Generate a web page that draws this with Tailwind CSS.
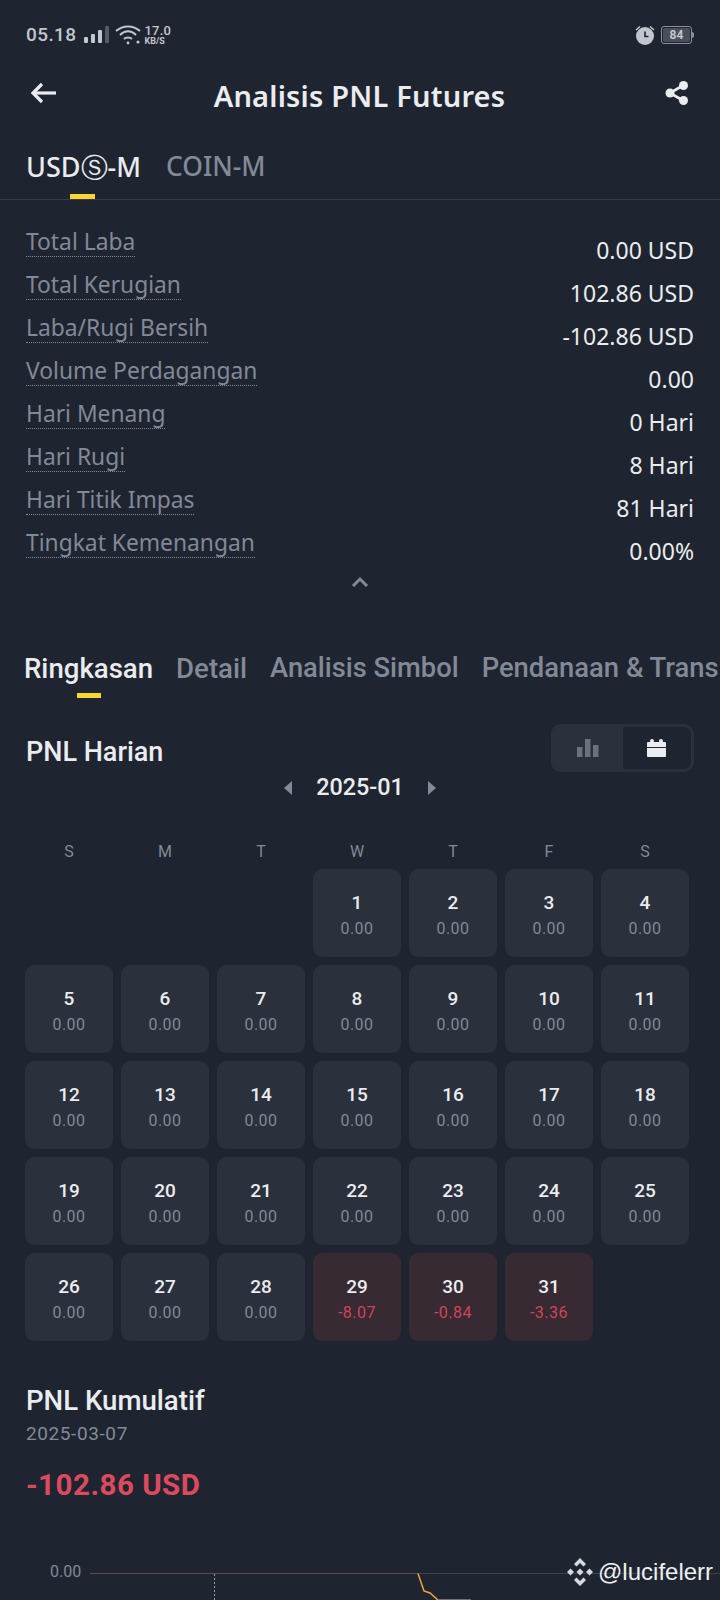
<!DOCTYPE html>
<html lang="en">
<head>
<meta charset="UTF-8">
<meta name="viewport" content="width=device-width, initial-scale=1.0">
<script src="https://cdn.jsdelivr.net/npm/@tailwindcss/browser@4"></script>
<title>Analisis PNL Futures</title>
</head>
<body class="bg-[#1f2530]">
<div class="relative w-[720px] h-[1600px] overflow-hidden bg-[#1f2530] font-['Noto_Sans',sans-serif] text-[#eaecef]">

  <!-- status bar -->
  <div class="flex items-center justify-between h-[70px] pl-[26px] pr-[26px] text-[#c3c6cd]">
    <div class="flex items-center">
      <span class="font-['Roboto',sans-serif] font-medium text-[19px] tracking-[0.4px]">05.18</span>
      <svg class="ml-[8px]" width="25" height="18" viewBox="0 0 25 18" fill="#c3c6cd"><rect x="0" y="11" width="4" height="6" rx="1"/><rect x="7" y="8" width="4" height="9" rx="1"/><rect x="14" y="4" width="4" height="13" rx="1"/><rect x="21" y="0" width="4" height="17" rx="1" fill="#565b66"/></svg>
      <svg class="ml-[6px]" width="26" height="20" viewBox="0 0 26 20" fill="none" stroke="#c3c6cd" stroke-width="2"><path d="M1 6 C8 0 18 0 25 6"/><path d="M5 10 C10 5 16 5 21 10"/><path d="M9 14 C11 12 15 12 17 14"/><circle cx="13" cy="18" r="1.4" fill="#c3c6cd" stroke="none"/><circle cx="23" cy="17" r="1.6" fill="#c3c6cd" stroke="none"/></svg>
      <div class="ml-[3px] flex flex-col items-start font-['Roboto',sans-serif] font-medium">
        <span class="text-[13px] leading-[11px] tracking-[0.2px]">17.0</span>
        <span class="text-[9px] leading-[10px] font-bold">KB/S</span>
      </div>
    </div>
    <div class="flex items-center">
      <svg width="22" height="22" viewBox="0 0 22 22"><path d="M2 6 L6 2.5 M20 6 L16 2.5" stroke="#c3c6cd" stroke-width="1.6" fill="none"/><circle cx="11" cy="12" r="9" fill="#c3c6cd"/><path d="M11 7.5 V12.5 H14.5" stroke="#1f2530" stroke-width="1.6" fill="none"/></svg>
      <div class="ml-[5px] flex items-center">
        <div class="flex items-center justify-center w-[31px] h-[18px] rounded-[3px] border border-[#8a8e98]">
          <span class="flex items-center justify-center w-[27px] h-[14px] rounded-[2px] bg-[#4a4f5c] font-['Roboto',sans-serif] font-bold text-[12px] leading-none text-[#c3c6cd]">84</span>
        </div>
        <div class="w-[2px] h-[6px] bg-[#8a8e98] rounded-r-sm"></div>
      </div>
    </div>
  </div>

  <!-- title bar -->
  <div class="relative flex items-center justify-between h-[50px] pl-[30px] pr-[31px]">
    <svg class="-mt-[4px]" width="26" height="22" viewBox="0 0 26 22" fill="none" stroke="#eaecef" stroke-width="3.2"><path d="M12 2 L3 11 L12 20"/><path d="M3 11 H26"/></svg>
    <h1 class="text-[29px] font-semibold leading-none tracking-[0.2px] -ml-[2px]">Analisis PNL Futures</h1>
    <svg class="-mt-[4px]" width="24" height="26" viewBox="0 0 24 26" fill="#eaecef" stroke="#eaecef"><circle cx="18.5" cy="5.5" r="4.5" stroke="none"/><circle cx="18.5" cy="20.5" r="4.5" stroke="none"/><circle cx="5" cy="13" r="4.5" stroke="none"/><path d="M18 5.5 L5 13 L18 20.5" fill="none" stroke-width="2.6"/></svg>
  </div>

  <!-- market tabs -->
  <div class="relative flex items-center gap-[25px] h-[80px] pt-[14px] pl-[26px] border-b border-[#363b46]">
    <span class="text-[27px] font-medium leading-none">USDⓈ-M</span>
    <span class="text-[26.4px] font-medium leading-none text-[#828997]">COIN-M</span>
    <div class="absolute left-[70px] bottom-0 w-[25px] h-[5px] bg-[#fcd535]"></div>
  </div>

  <!-- stats -->
  <div class="flex flex-col pt-[26px] pl-[26px] pr-[26px]">
    <div class="flex justify-between items-start h-[43px]"><span class="pt-[2px] text-[22.8px] leading-[28px] text-[#828997] border-b border-dotted border-[#828997]">Total Laba</span><span class="mt-[9px] text-[23px] leading-[30px]">0.00 USD</span></div>
    <div class="flex justify-between items-start h-[43px]"><span class="pt-[2px] text-[22.8px] leading-[28px] text-[#828997] border-b border-dotted border-[#828997]">Total Kerugian</span><span class="mt-[9px] text-[23px] leading-[30px]">102.86 USD</span></div>
    <div class="flex justify-between items-start h-[43px]"><span class="pt-[2px] text-[22.8px] leading-[28px] text-[#828997] border-b border-dotted border-[#828997]">Laba/Rugi Bersih</span><span class="mt-[9px] text-[23px] leading-[30px]">-102.86 USD</span></div>
    <div class="flex justify-between items-start h-[43px]"><span class="pt-[2px] text-[22.8px] leading-[28px] text-[#828997] border-b border-dotted border-[#828997]">Volume Perdagangan</span><span class="mt-[9px] text-[23px] leading-[30px]">0.00</span></div>
    <div class="flex justify-between items-start h-[43px]"><span class="pt-[2px] text-[22.8px] leading-[28px] text-[#828997] border-b border-dotted border-[#828997]">Hari Menang</span><span class="mt-[9px] text-[23px] leading-[30px]">0 Hari</span></div>
    <div class="flex justify-between items-start h-[43px]"><span class="pt-[2px] text-[22.8px] leading-[28px] text-[#828997] border-b border-dotted border-[#828997]">Hari Rugi</span><span class="mt-[9px] text-[23px] leading-[30px]">8 Hari</span></div>
    <div class="flex justify-between items-start h-[43px]"><span class="pt-[2px] text-[22.8px] leading-[28px] text-[#828997] border-b border-dotted border-[#828997]">Hari Titik Impas</span><span class="mt-[9px] text-[23px] leading-[30px]">81 Hari</span></div>
    <div class="flex justify-between items-start h-[43px]"><span class="pt-[2px] text-[22.8px] leading-[28px] text-[#828997] border-b border-dotted border-[#828997]">Tingkat Kemenangan</span><span class="mt-[9px] text-[23px] leading-[30px]">0.00%</span></div>
  </div>
  <div class="flex justify-center mt-[6px] h-[14px]">
    <svg width="18" height="12" viewBox="0 0 18 12" fill="none" stroke="#828997" stroke-width="3"><path d="M2 10 L9 3 L16 10"/></svg>
  </div>

  <!-- section tabs -->
  <div class="relative mt-[57px] flex items-center gap-[23px] pt-[2px] pl-[24px] whitespace-nowrap h-[42px] font-['Roboto',sans-serif]">
    <span class="text-[27.6px] font-medium leading-none">Ringkasan</span>
    <span class="text-[27.6px] font-medium leading-none text-[#828997]">Detail</span>
    <span class="text-[27.3px] font-medium leading-none text-[#828997]">Analisis Simbol</span>
    <span class="text-[27.4px] font-medium leading-none text-[#828997]">Pendanaan &amp; Trans</span>
    <div class="absolute left-[77px] bottom-[-9px] w-[24px] h-[5px] bg-[#fcd535]"></div>
  </div>

  <!-- daily pnl head -->
  <div class="flex items-center justify-between mt-[35px] pl-[26px] pr-[26px] font-['Roboto',sans-serif]">
    <span class="text-[27px] font-medium leading-none mt-[8px]">PNL Harian</span>
    <div class="flex w-[143px] h-[48px] rounded-[10px] border-[3px] border-[#2a303c] overflow-hidden">
      <div class="flex-1 flex items-center justify-center bg-[#2a303c]">
        <svg width="22" height="18" viewBox="0 0 22 18" fill="#6b707c"><rect x="0" y="8" width="5.5" height="10"/><rect x="8" y="0" width="5.5" height="18"/><rect x="16" y="6" width="5.5" height="12"/></svg>
      </div>
      <div class="flex-1 flex items-center justify-center">
        <svg width="19" height="18" viewBox="0 0 19 18" fill="#eaecef"><circle cx="5" cy="2" r="2"/><circle cx="14" cy="2" r="2"/><path d="M0 4 Q0 3 1 3 H18 Q19 3 19 4 V8 H0 Z"/><path d="M0 9 H19 V17 Q19 18 18 18 H1 Q0 18 0 17 Z"/></svg>
      </div>
    </div>
  </div>

  <!-- month switch -->
  <div class="flex items-center justify-center gap-[23px] mt-[-1px] h-[34px] font-['Roboto',sans-serif]">
    <svg width="10" height="14" viewBox="0 0 10 14" fill="#828997"><path d="M9 0 V14 L1 7 Z"/></svg>
    <span class="text-[23.4px] font-medium leading-none">2025-01</span>
    <svg width="10" height="14" viewBox="0 0 10 14" fill="#828997"><path d="M1 0 V14 L9 7 Z"/></svg>
  </div>

  <!-- calendar -->
  <div class="grid grid-cols-7 gap-[8px] mt-[36px] pl-[25px] pr-[31px] font-['Roboto',sans-serif]">
    <div class="col-span-7 grid grid-cols-7 gap-[8px] text-center text-[16px] leading-[22px] text-[#828997] h-[22px] -mb-[2px]"><span>S</span><span>M</span><span>T</span><span>W</span><span>T</span><span>F</span><span>S</span></div>
    <div class="h-[88px]"></div><div class="h-[88px]"></div><div class="h-[88px]"></div>
    <div class="flex flex-col items-center justify-center h-[88px] pt-[5px] rounded-[9px] bg-[#2a303c]"><span class="text-[19px] leading-[26px] font-medium">1</span><span class="text-[16px] leading-[25px] tracking-[0.5px] text-[#828997]">0.00</span></div>
    <div class="flex flex-col items-center justify-center h-[88px] pt-[5px] rounded-[9px] bg-[#2a303c]"><span class="text-[19px] leading-[26px] font-medium">2</span><span class="text-[16px] leading-[25px] tracking-[0.5px] text-[#828997]">0.00</span></div>
    <div class="flex flex-col items-center justify-center h-[88px] pt-[5px] rounded-[9px] bg-[#2a303c]"><span class="text-[19px] leading-[26px] font-medium">3</span><span class="text-[16px] leading-[25px] tracking-[0.5px] text-[#828997]">0.00</span></div>
    <div class="flex flex-col items-center justify-center h-[88px] pt-[5px] rounded-[9px] bg-[#2a303c]"><span class="text-[19px] leading-[26px] font-medium">4</span><span class="text-[16px] leading-[25px] tracking-[0.5px] text-[#828997]">0.00</span></div>
    <div class="flex flex-col items-center justify-center h-[88px] pt-[5px] rounded-[9px] bg-[#2a303c]"><span class="text-[19px] leading-[26px] font-medium">5</span><span class="text-[16px] leading-[25px] tracking-[0.5px] text-[#828997]">0.00</span></div>
    <div class="flex flex-col items-center justify-center h-[88px] pt-[5px] rounded-[9px] bg-[#2a303c]"><span class="text-[19px] leading-[26px] font-medium">6</span><span class="text-[16px] leading-[25px] tracking-[0.5px] text-[#828997]">0.00</span></div>
    <div class="flex flex-col items-center justify-center h-[88px] pt-[5px] rounded-[9px] bg-[#2a303c]"><span class="text-[19px] leading-[26px] font-medium">7</span><span class="text-[16px] leading-[25px] tracking-[0.5px] text-[#828997]">0.00</span></div>
    <div class="flex flex-col items-center justify-center h-[88px] pt-[5px] rounded-[9px] bg-[#2a303c]"><span class="text-[19px] leading-[26px] font-medium">8</span><span class="text-[16px] leading-[25px] tracking-[0.5px] text-[#828997]">0.00</span></div>
    <div class="flex flex-col items-center justify-center h-[88px] pt-[5px] rounded-[9px] bg-[#2a303c]"><span class="text-[19px] leading-[26px] font-medium">9</span><span class="text-[16px] leading-[25px] tracking-[0.5px] text-[#828997]">0.00</span></div>
    <div class="flex flex-col items-center justify-center h-[88px] pt-[5px] rounded-[9px] bg-[#2a303c]"><span class="text-[19px] leading-[26px] font-medium">10</span><span class="text-[16px] leading-[25px] tracking-[0.5px] text-[#828997]">0.00</span></div>
    <div class="flex flex-col items-center justify-center h-[88px] pt-[5px] rounded-[9px] bg-[#2a303c]"><span class="text-[19px] leading-[26px] font-medium">11</span><span class="text-[16px] leading-[25px] tracking-[0.5px] text-[#828997]">0.00</span></div>
    <div class="flex flex-col items-center justify-center h-[88px] pt-[5px] rounded-[9px] bg-[#2a303c]"><span class="text-[19px] leading-[26px] font-medium">12</span><span class="text-[16px] leading-[25px] tracking-[0.5px] text-[#828997]">0.00</span></div>
    <div class="flex flex-col items-center justify-center h-[88px] pt-[5px] rounded-[9px] bg-[#2a303c]"><span class="text-[19px] leading-[26px] font-medium">13</span><span class="text-[16px] leading-[25px] tracking-[0.5px] text-[#828997]">0.00</span></div>
    <div class="flex flex-col items-center justify-center h-[88px] pt-[5px] rounded-[9px] bg-[#2a303c]"><span class="text-[19px] leading-[26px] font-medium">14</span><span class="text-[16px] leading-[25px] tracking-[0.5px] text-[#828997]">0.00</span></div>
    <div class="flex flex-col items-center justify-center h-[88px] pt-[5px] rounded-[9px] bg-[#2a303c]"><span class="text-[19px] leading-[26px] font-medium">15</span><span class="text-[16px] leading-[25px] tracking-[0.5px] text-[#828997]">0.00</span></div>
    <div class="flex flex-col items-center justify-center h-[88px] pt-[5px] rounded-[9px] bg-[#2a303c]"><span class="text-[19px] leading-[26px] font-medium">16</span><span class="text-[16px] leading-[25px] tracking-[0.5px] text-[#828997]">0.00</span></div>
    <div class="flex flex-col items-center justify-center h-[88px] pt-[5px] rounded-[9px] bg-[#2a303c]"><span class="text-[19px] leading-[26px] font-medium">17</span><span class="text-[16px] leading-[25px] tracking-[0.5px] text-[#828997]">0.00</span></div>
    <div class="flex flex-col items-center justify-center h-[88px] pt-[5px] rounded-[9px] bg-[#2a303c]"><span class="text-[19px] leading-[26px] font-medium">18</span><span class="text-[16px] leading-[25px] tracking-[0.5px] text-[#828997]">0.00</span></div>
    <div class="flex flex-col items-center justify-center h-[88px] pt-[5px] rounded-[9px] bg-[#2a303c]"><span class="text-[19px] leading-[26px] font-medium">19</span><span class="text-[16px] leading-[25px] tracking-[0.5px] text-[#828997]">0.00</span></div>
    <div class="flex flex-col items-center justify-center h-[88px] pt-[5px] rounded-[9px] bg-[#2a303c]"><span class="text-[19px] leading-[26px] font-medium">20</span><span class="text-[16px] leading-[25px] tracking-[0.5px] text-[#828997]">0.00</span></div>
    <div class="flex flex-col items-center justify-center h-[88px] pt-[5px] rounded-[9px] bg-[#2a303c]"><span class="text-[19px] leading-[26px] font-medium">21</span><span class="text-[16px] leading-[25px] tracking-[0.5px] text-[#828997]">0.00</span></div>
    <div class="flex flex-col items-center justify-center h-[88px] pt-[5px] rounded-[9px] bg-[#2a303c]"><span class="text-[19px] leading-[26px] font-medium">22</span><span class="text-[16px] leading-[25px] tracking-[0.5px] text-[#828997]">0.00</span></div>
    <div class="flex flex-col items-center justify-center h-[88px] pt-[5px] rounded-[9px] bg-[#2a303c]"><span class="text-[19px] leading-[26px] font-medium">23</span><span class="text-[16px] leading-[25px] tracking-[0.5px] text-[#828997]">0.00</span></div>
    <div class="flex flex-col items-center justify-center h-[88px] pt-[5px] rounded-[9px] bg-[#2a303c]"><span class="text-[19px] leading-[26px] font-medium">24</span><span class="text-[16px] leading-[25px] tracking-[0.5px] text-[#828997]">0.00</span></div>
    <div class="flex flex-col items-center justify-center h-[88px] pt-[5px] rounded-[9px] bg-[#2a303c]"><span class="text-[19px] leading-[26px] font-medium">25</span><span class="text-[16px] leading-[25px] tracking-[0.5px] text-[#828997]">0.00</span></div>
    <div class="flex flex-col items-center justify-center h-[88px] pt-[5px] rounded-[9px] bg-[#2a303c]"><span class="text-[19px] leading-[26px] font-medium">26</span><span class="text-[16px] leading-[25px] tracking-[0.5px] text-[#828997]">0.00</span></div>
    <div class="flex flex-col items-center justify-center h-[88px] pt-[5px] rounded-[9px] bg-[#2a303c]"><span class="text-[19px] leading-[26px] font-medium">27</span><span class="text-[16px] leading-[25px] tracking-[0.5px] text-[#828997]">0.00</span></div>
    <div class="flex flex-col items-center justify-center h-[88px] pt-[5px] rounded-[9px] bg-[#2a303c]"><span class="text-[19px] leading-[26px] font-medium">28</span><span class="text-[16px] leading-[25px] tracking-[0.5px] text-[#828997]">0.00</span></div>
    <div class="flex flex-col items-center justify-center h-[88px] pt-[5px] rounded-[9px] bg-[#372a33]"><span class="text-[19px] leading-[26px] font-medium">29</span><span class="text-[16px] leading-[25px] tracking-[0.5px] text-[#cf4557]">-8.07</span></div>
    <div class="flex flex-col items-center justify-center h-[88px] pt-[5px] rounded-[9px] bg-[#372a33]"><span class="text-[19px] leading-[26px] font-medium">30</span><span class="text-[16px] leading-[25px] tracking-[0.5px] text-[#cf4557]">-0.84</span></div>
    <div class="flex flex-col items-center justify-center h-[88px] pt-[5px] rounded-[9px] bg-[#372a33]"><span class="text-[19px] leading-[26px] font-medium">31</span><span class="text-[16px] leading-[25px] tracking-[0.5px] text-[#cf4557]">-3.36</span></div>
  </div>

  <!-- cumulative -->
  <div class="mt-[43px] pl-[26px] font-['Roboto',sans-serif]">
    <div class="text-[27.6px] font-medium leading-[34px]">PNL Kumulatif</div>
    <div class="mt-[3px] text-[19px] leading-[26px] tracking-[0.6px] text-[#828997]">2025-03-07</div>
    <div class="mt-[20px] text-[29.5px] font-bold leading-[36px] tracking-[0.5px] text-[#dc4a60]">-102.86 USD</div>
  </div>

  <!-- chart, clipped by the bottom of the window -->
  <div class="absolute left-0 top-[1560px] w-[720px] h-[40px]">
    <span class="absolute left-[50px] top-[2px] font-['Roboto',sans-serif] text-[16px] leading-[20px] text-[#828997]">0.00</span>
    <svg class="absolute left-0 top-0" width="720" height="40" viewBox="0 0 720 40" fill="none">
      <path d="M90 13.5 H720" stroke="#3b404b"/>
      <path d="M90 13.5 H418" stroke="#6b4a45"/>
      <path d="M214.5 14 V40" stroke="#9a9ea8" stroke-dasharray="2 2"/>
      <path d="M418 13.5 L424 31 L430 33 L438 40" stroke="#f0a63c" stroke-width="1.5"/>
      <path d="M438 39.5 H471" stroke="#6b707c"/>
    </svg>
  </div>

  <!-- watermark -->
  <div class="absolute left-[566px] top-[1558px] flex items-center">
    <svg width="28" height="28" viewBox="0 0 28 28" fill="#d8dade"><path d="M14 0 L20 6 L17.5 8.5 L14 5 L10.5 8.5 L8 6 Z"/><path d="M14 28 L20 22 L17.5 19.5 L14 23 L10.5 19.5 L8 22 Z"/><path d="M4.5 10.5 L8 14 L4.5 17.5 L1 14 Z"/><path d="M23.5 10.5 L27 14 L23.5 17.5 L20 14 Z"/><path d="M14 10.5 L17.5 14 L14 17.5 L10.5 14 Z"/></svg>
    <span class="ml-[4px] font-['Liberation_Sans',sans-serif] text-[24px] leading-none text-[#eef0f3]">@lucifelerr</span>
  </div>
</div>
</body>
</html>
